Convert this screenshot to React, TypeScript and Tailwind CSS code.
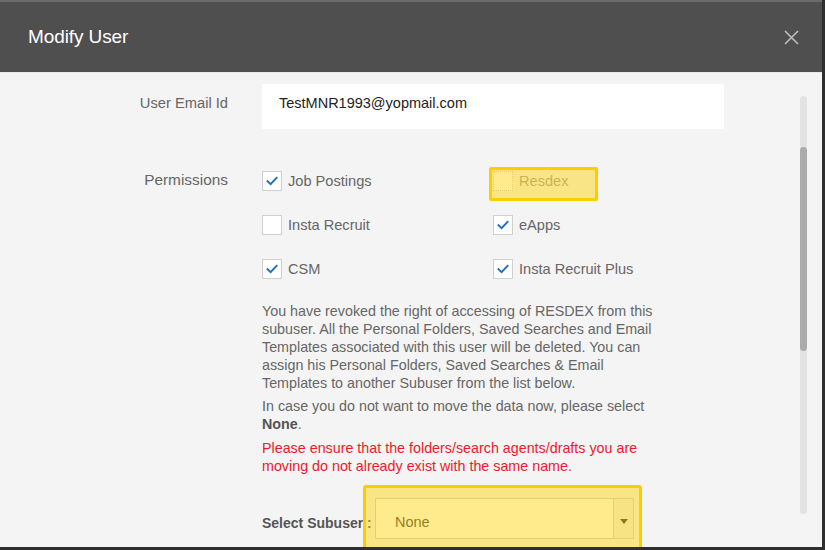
import { ReactNode } from 'react';

const font = { fontFamily: '"Liberation Sans", Arial, sans-serif' };

function Box({ checked, disabled }: { checked?: boolean; disabled?: boolean }) {
  return (
    <span
      className={`w-[20px] h-[20px] flex items-center justify-center bg-white border ${
        disabled ? 'border-dotted border-[#c8c8c8]' : 'border-[#d0d0d0]'
      }`}
    >
      {checked && (
        <svg width="14" height="14" viewBox="0 0 14 14" fill="none">
          <path d="M2.5 7.2 L5.6 10.2 L11.6 3.8" stroke="#1f6fbf" strokeWidth="1.9" strokeLinecap="square" />
        </svg>
      )}
    </span>
  );
}

function Perm({ label, checked, disabled, children }: { label: string; checked?: boolean; disabled?: boolean; children?: ReactNode }) {
  return (
    <div className="relative w-[231px] h-[20px] flex items-center gap-[6px]">
      <Box checked={checked} disabled={disabled} />
      <span className={`text-[14.6px] leading-[18px] ${disabled ? 'text-[#9a9a9a]' : 'text-[#666]'}`}>{label}</span>
      {children}
    </div>
  );
}

export default function App() {
  return (
    <div
      style={font}
      className="w-[825px] h-[550px] overflow-hidden flex flex-col bg-[#f4f4f4] border-r-[3px] border-b-[3px] border-[#2e2e2e]"
    >
      {/* Header */}
      <div className="h-[72px] shrink-0 bg-[#4f4f4f] border-t-2 border-[#6b6b6b] flex items-center justify-between pl-[28px] pr-[23px]">
        <h1 className="text-[19px] text-white tracking-[-0.1px]">Modify User</h1>
        <svg width="15" height="15" viewBox="0 0 15 15" fill="none">
          <path d="M1 1 L14 14 M14 1 L1 14" stroke="#bdbdbd" strokeWidth="1.6" />
        </svg>
      </div>

      {/* Body */}
      <div className="flex-1 flex border-t border-[#e9e9e9] min-h-0">
        <div className="w-[800px] shrink-0 pt-[11px]">
          {/* Email */}
          <div className="flex">
            <label className="w-[228px] text-right pt-[10px] text-[14.7px] leading-[18px] text-[#666]">User Email Id</label>
            <div className="ml-[34px] w-[462px] h-[45px] bg-white pl-[17px] pt-[10px] text-[14.5px] leading-[18px] text-[#222]">
              TestMNR1993@yopmail.com
            </div>
          </div>

          {/* Permissions */}
          <div className="flex mt-[42px]">
            <label className="w-[228px] text-right text-[15.4px] leading-[18px] text-[#666]">Permissions</label>
            <div className="ml-[34px] flex flex-col">
              <div className="flex flex-col gap-[24px]">
                <div className="flex">
                  <Perm label="Job Postings" checked />
                  <Perm label="Resdex" disabled>
                    <span className="absolute -left-[4px] -top-[4px] w-[109px] h-[34px] rounded-[2px] border-[3px] border-[#ffcc00] bg-[#ffd400]/45" />
                  </Perm>
                </div>
                <div className="flex">
                  <Perm label="Insta Recruit" />
                  <Perm label="eApps" checked />
                </div>
                <div className="flex">
                  <Perm label="CSM" checked />
                  <Perm label="Insta Recruit Plus" checked />
                </div>
              </div>

              <div className="w-[402px] mt-[23px] text-[14.3px] leading-[18px] text-[#666]">
                <p>
                  You have revoked the right of accessing of RESDEX from this subuser. All the Personal Folders, Saved
                  Searches and Email Templates associated with this user will be deleted. You can assign his Personal
                  Folders, Saved Searches &amp; Email Templates to another Subuser from the list below.
                </p>
                <p className="mt-[5px]">
                  In case you do not want to move the data now, please select <b className="text-[#555]">None</b>.
                </p>
                <p className="mt-[6px] text-[#f0182a]">
                  Please ensure that the folders/search agents/drafts you are moving do not already exist with the same
                  name.
                </p>
              </div>

              <div className="flex items-end mt-[23px]">
                <span className="mb-[7px] text-[14px] leading-[18px] font-bold text-[#555] w-[113px]">Select Subuser :</span>
                <div className="relative w-[259px] h-[41px] bg-white border border-[#cfcfcf] flex">
                  <span className="flex-1 pl-[19px] pt-[14px] text-[14.5px] leading-[18px] text-[#3a3a3a]">None</span>
                  <span className="w-[20px] border-l border-[#cfcfcf] bg-[#f0f0f0] flex items-center justify-center pt-[6px]">
                    <svg width="8" height="5" viewBox="0 0 8 5">
                      <path d="M0 0 H8 L4 5 Z" fill="#333" />
                    </svg>
                  </span>
                  <span className="absolute -left-[13px] -top-[14px] w-[279px] h-[90px] rounded-[3px] border-[3px] border-[#ffcc00] bg-[#ffd400]/45" />
                </div>
              </div>
            </div>
          </div>
        </div>

        {/* Scrollbar */}
        <div className="w-[7px] shrink-0 pt-[23px]">
          <div className="h-[418px] rounded-full bg-[#e2e2e2] pt-[51px]">
            <div className="h-[204px] rounded-full bg-[#ababab]" />
          </div>
        </div>
      </div>
    </div>
  );
}
